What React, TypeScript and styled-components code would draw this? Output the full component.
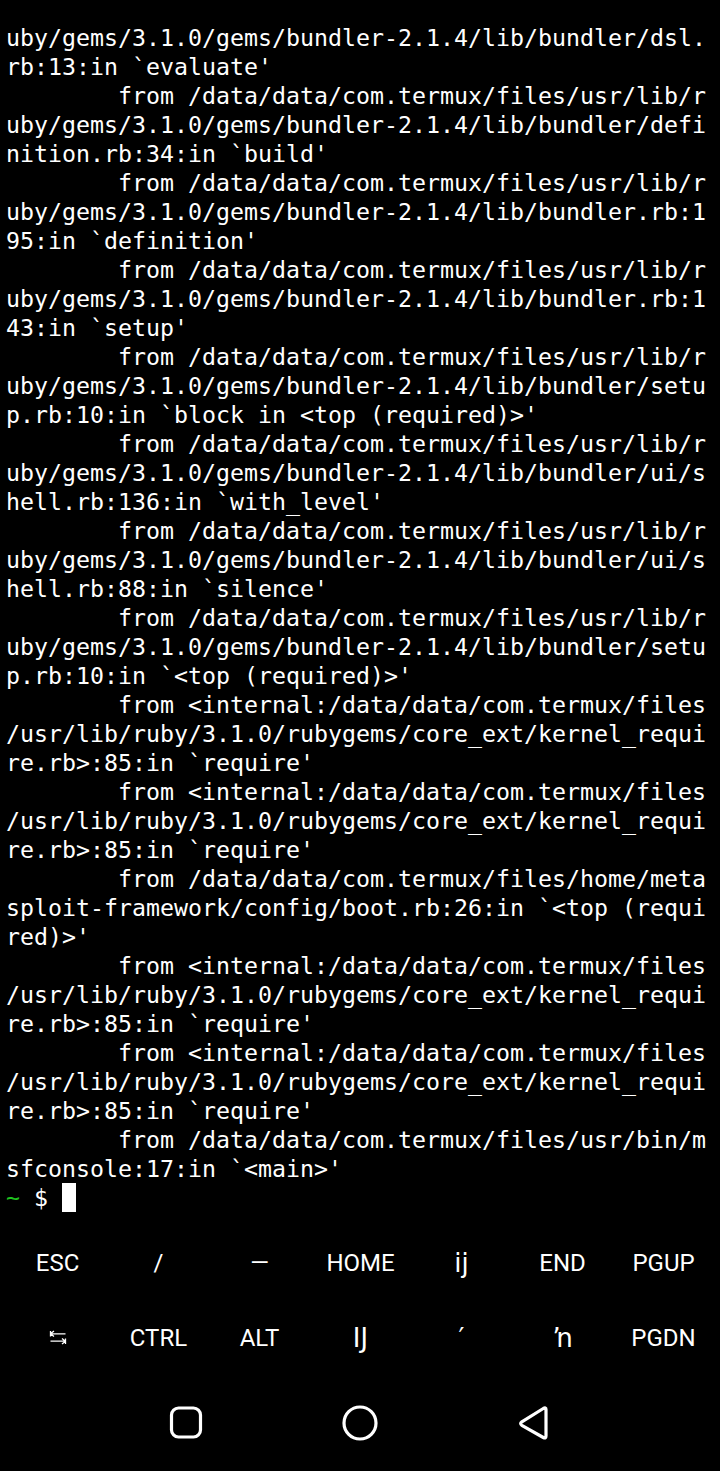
import styled, { createGlobalStyle } from "styled-components";

const GlobalStyle = createGlobalStyle`
  html, body {
    margin: 0;
    padding: 0;
    background: #000;
  }
`;

const Screen = styled.div`
  width: 720px;
  height: 1471px;
  background: #000;
  color: #fff;
  display: flex;
  flex-direction: column;
  overflow: hidden;
`;

const Terminal = styled.div`
  padding: 23px 0 0 6px;
  height: 1225px;
  flex-shrink: 0;
  box-sizing: border-box;
  font-family: "DejaVu Sans Mono", monospace;
  font-size: 23.26px;
  line-height: 29px;
  white-space: pre;
`;

const Line = styled.div`
  height: 29px;
`;

const Tilde = styled.span`
  color: #1fc21f;
`;

const Cursor = styled.span`
  display: inline-block;
  width: 14px;
  height: 29px;
  background: #fff;
  vertical-align: top;
`;

const ExtraKeys = styled.div`
  display: grid;
  grid-template-columns: repeat(7, 1fr);
  grid-auto-rows: 75px;
  padding: 0 6px 0 7px;
  flex-shrink: 0;
`;

const Key = styled.div<{ glyph?: boolean }>`
  display: flex;
  align-items: center;
  justify-content: center;
  font-family: ${(p) => (p.glyph ? '"DejaVu Sans", sans-serif' : 'Roboto, "DejaVu Sans", sans-serif')};
  font-size: ${(p) => (p.glyph ? "26px" : "24px")};
  font-weight: 400;
  color: #fff;
`;

const NavBar = styled.div`
  flex: 1;
  display: grid;
  grid-template-columns: repeat(3, 174px);
  justify-content: center;
  align-items: center;
`;

const NavButton = styled.div`
  display: flex;
  justify-content: center;
  align-items: center;
`;

const frame = "        from /data/data/com.termux/files/usr/lib/r";
const internal = "        from <internal:/data/data/com.termux/files";
const usrLib = "/usr/lib/ruby/3.1.0/rubygems/core_ext/kernel_requi";
const reRb = "re.rb>:85:in `require'";
const gems = "uby/gems/3.1.0/gems/bundler-2.1.4/lib/bundler";

const lines = [
  gems + "/dsl.",
  "rb:13:in `evaluate'",
  frame,
  gems + "/defi",
  "nition.rb:34:in `build'",
  frame,
  gems + ".rb:1",
  "95:in `definition'",
  frame,
  gems + ".rb:1",
  "43:in `setup'",
  frame,
  gems + "/setu",
  "p.rb:10:in `block in <top (required)>'",
  frame,
  gems + "/ui/s",
  "hell.rb:136:in `with_level'",
  frame,
  gems + "/ui/s",
  "hell.rb:88:in `silence'",
  frame,
  gems + "/setu",
  "p.rb:10:in `<top (required)>'",
  internal,
  usrLib,
  reRb,
  internal,
  usrLib,
  reRb,
  "        from /data/data/com.termux/files/home/meta",
  "sploit-framework/config/boot.rb:26:in `<top (requi",
  "red)>'",
  internal,
  usrLib,
  reRb,
  internal,
  usrLib,
  reRb,
  "        from /data/data/com.termux/files/usr/bin/m",
  "sfconsole:17:in `<main>'",
];

const TabIcon = () => (
  <svg width="18" height="15" viewBox="0 0 18 15" fill="none" stroke="#fff" strokeWidth="1.3">
    <path d="M1.5 1v5.5M1.5 3.8h15M1.5 3.8l3.5-2.8M1.5 3.8l3.5 2.8" />
    <path d="M16.5 8.5v5.5M1.5 11.2h15M16.5 11.2l-3.5-2.8M16.5 11.2l-3.5 2.8" />
  </svg>
);

const App = () => {
  return (
    <Screen>
      <GlobalStyle />
      <Terminal>
        {lines.map((l, i) => (
          <Line key={i}>{l}</Line>
        ))}
        <Line>
          <Tilde>~</Tilde> $ <Cursor />
        </Line>
      </Terminal>
      <ExtraKeys>
        <Key>ESC</Key>
        <Key>/</Key>
        <Key>—</Key>
        <Key>HOME</Key>
        <Key glyph>ĳ</Key>
        <Key>END</Key>
        <Key>PGUP</Key>
        <Key>
          <TabIcon />
        </Key>
        <Key>CTRL</Key>
        <Key>ALT</Key>
        <Key glyph>Ĳ</Key>
        <Key glyph>′</Key>
        <Key glyph>ŉ</Key>
        <Key>PGDN</Key>
      </ExtraKeys>
      <NavBar>
        <NavButton>
          <svg width="34" height="34" viewBox="0 0 34 34">
            <rect x="2.5" y="2" width="29" height="29" rx="7" fill="none" stroke="#fff" strokeWidth="3.2" />
          </svg>
        </NavButton>
        <NavButton>
          <svg width="38" height="38" viewBox="0 0 38 38">
            <circle cx="19" cy="19" r="16" fill="none" stroke="#fff" strokeWidth="3.2" />
          </svg>
        </NavButton>
        <NavButton>
          <svg width="36" height="38" viewBox="0 0 36 38">
            <path
              d="M30 5.5 L30 32 Q30 35 27.3 33.5 L5.8 21.3 Q3.5 19.5 5.8 17.8 L27.3 4.5 Q30 3 30 5.5 Z"
              fill="none"
              stroke="#fff"
              strokeWidth="3.2"
              strokeLinejoin="round"
            />
          </svg>
        </NavButton>
      </NavBar>
    </Screen>
  );
};

export default App;
